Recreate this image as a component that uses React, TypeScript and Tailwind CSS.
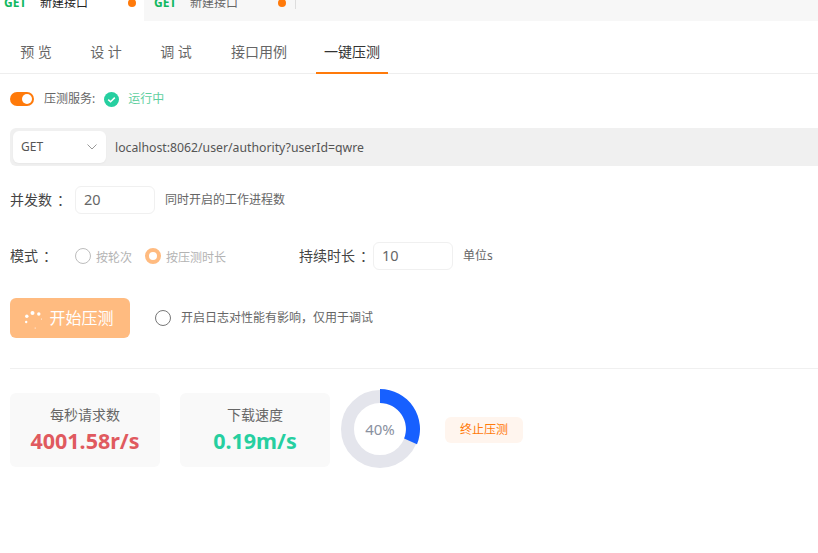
const font = "font-['Noto_Sans','Noto_Sans_CJK_SC',sans-serif]";

function RequestTab({ active, last }: { active?: boolean; last?: boolean }) {
  return (
    <div className={`h-[21px] overflow-hidden ${active ? "w-[144px] bg-white pl-1" : "bg-[#f7f7f7]"} ${last ? "w-[152px] pl-[10px]" : ""}`}>
      <div className="-mt-[8px] flex h-[22px] items-center">
        <span className="w-[36px] text-[12px] font-bold text-[#10b860]">GET</span>
        <span className={`text-[12px] ${active ? "text-[#222]" : "text-[#666]"}`}>新建接口</span>
        <span className={`ml-auto h-2 w-2 rounded-full bg-[#ff7a0a] ${last ? "mr-[9px]" : "mr-2"}`} />
        {last && <span className="h-[12px] w-px bg-[#ddd]" />}
      </div>
    </div>
  );
}

function FieldLabel({ text, width }: { text: string; width: string }) {
  return (
    <span className={`whitespace-nowrap pb-[2px] text-[14px] text-[#444] ${width}`}>
      {text}
      <span className="ml-[5px]">：</span>
    </span>
  );
}

function Radio({ checked, label }: { checked?: boolean; label: string }) {
  return (
    <div className="flex items-center gap-[5px]">
      {checked ? (
        <span className="h-4 w-4 rounded-full border-[4px] border-[#ffbb80] bg-white" />
      ) : (
        <span className="h-4 w-4 rounded-full border border-[#bdbdbd] bg-white" />
      )}
      <span className="mt-[3px] text-[12px] text-[#b3b3b3]">{label}</span>
    </div>
  );
}

function Stat({ title, value, color }: { title: string; value: string; color: string }) {
  return (
    <div className="flex h-[74px] w-[150px] flex-col items-center rounded-md bg-[#f9f9f9] pt-[12px]">
      <span className="text-[14px] leading-[20px] text-[#666]">{title}</span>
      <span className={`text-[21.5px] font-bold leading-[32px] ${color}`}>{value}</span>
    </div>
  );
}

export default function App() {
  const tabs = ["预 览", "设 计", "调 试", "接口用例", "一键压测"];
  return (
    <div className={`h-[553px] w-[818px] overflow-hidden bg-white ${font}`}>
      <div className="flex h-[21px] bg-[#f7f7f7]">
        <RequestTab active />
        <RequestTab last />
      </div>

      <div className="flex h-[53px] gap-[18px] border-b border-[#eee] px-[10px]">
        {tabs.map((t, i) => (
          <div
            key={t}
            className={`-mb-px flex h-[53px] items-center justify-center whitespace-nowrap border-b-2 pt-[10px] text-[14px] ${
              i === 4
                ? "ml-[3px] w-[72px] border-[#ff7a0a] text-[#333]"
                : i === 3
                  ? "ml-[3px] w-[72px] border-transparent text-[#666]"
                  : "w-[52px] border-transparent text-[#666]"
            }`}
          >
            {t}
          </div>
        ))}
      </div>

      <div className="flex h-[50px] items-center pl-[10px]">
        <div className="flex h-[14px] w-[24px] items-center justify-end rounded-full bg-[#ff7a0a] pr-[2px]">
          <span className="h-[10px] w-[10px] rounded-full bg-white" />
        </div>
        <span className="ml-[10px] text-[12px] text-[#666]">压测服务:</span>
        <svg className="ml-[9px]" width="15" height="15" viewBox="0 0 15 15">
          <circle cx="7.5" cy="7.5" r="7.5" fill="#26cfa0" />
          <path d="M4.2 7.6 L6.6 9.8 L10.8 5.6" fill="none" stroke="#fff" strokeWidth="1.5" />
        </svg>
        <span className="ml-[9px] text-[12px] text-[#5fcf9f]">运行中</span>
      </div>

      <div className="mt-[4px] ml-[10px] flex h-[38px] items-center rounded-l-md bg-[#f0f0f0] pl-[3px]">
        <div className="flex h-[32px] w-[93px] items-center justify-between rounded-md bg-white pl-[8px] pr-[9px] shadow-[0_1px_2px_rgba(0,0,0,0.04)]">
          <span className="text-[12px] text-[#555]">GET</span>
          <svg width="10" height="6" viewBox="0 0 10 6">
            <path d="M0.5 0.5 L5 5 L9.5 0.5" fill="none" stroke="#999" strokeWidth="1" />
          </svg>
        </div>
        <span className="ml-[9px] mt-[2px] text-[12.25px] text-[#555]">localhost:8062/user/authority?userId=qwre</span>
      </div>

      <div className="mt-[20px] flex h-[28px] items-center pl-[10px]">
        <FieldLabel text="并发数" width="w-[65px]" />
        <div className="flex h-[28px] w-[80px] items-center rounded-md border border-[#f0f0f0] pl-[8px] text-[14.5px] text-[#666]">20</div>
        <span className="ml-[10px] text-[12px] text-[#666]">同时开启的工作进程数</span>
      </div>

      <div className="mt-[28px] flex h-[28px] items-center pl-[10px]">
        <FieldLabel text="模式" width="w-[65px]" />
        <div className="flex w-[70px]">
          <Radio label="按轮次" />
        </div>
        <div className="flex w-[154px]">
          <Radio checked label="按压测时长" />
        </div>
        <FieldLabel text="持续时长" width="w-[74px]" />
        <div className="flex h-[28px] w-[80px] items-center rounded-md border border-[#f0f0f0] pl-[8px] text-[14.5px] text-[#666]">10</div>
        <span className="ml-[10px] text-[12px] text-[#666]">单位s</span>
      </div>

      <div className="mt-[28px] flex h-[40px] items-center pl-[10px]">
        <div className="flex h-[40px] w-[120px] items-center justify-center gap-[3px] rounded-md bg-[#ffbb80]">
          <svg className="overflow-visible" width="20" height="20" viewBox="0 0 20 20" fill="#fff">
            <circle cx="0.8" cy="8.3" r="1.7" />
            <circle cx="6.5" cy="5" r="2" />
            <circle cx="12.8" cy="6" r="1.7" />
            <circle cx="0.2" cy="14" r="1.2" />
            <circle cx="9.2" cy="20" r="0.6" />
            <circle cx="15.5" cy="11" r="0.5" />
          </svg>
          <span className="text-[16px] text-white">开始压测</span>
        </div>
        <span className="ml-[25px] h-4 w-4 rounded-full border border-[#777]" />
        <span className="ml-[10px] text-[12px] text-[#666]">开启日志对性能有影响，仅用于调试</span>
      </div>

      <div className="mt-[30px] ml-[10px] h-px bg-[#f0f0f0]" />

      <div className="mt-[20px] flex items-center pl-[10px]">
        <div className="mt-[2px] flex gap-[20px]">
          <Stat title="每秒请求数" value="4001.58r/s" color="text-[#e05a5f]" />
          <Stat title="下载速度" value="0.19m/s" color="text-[#26cfa0]" />
        </div>
        <div className="relative ml-[10px] flex h-[80px] w-[80px] items-center justify-center">
          <svg className="absolute left-0 top-0" width="80" height="80" viewBox="0 0 80 80">
            <circle cx="40" cy="40" r="32.5" fill="none" stroke="#e4e5ec" strokeWidth="13" />
            <path d="M40 0 A40 40 0 0 1 77 55.2 L64.1 49.6 A26 26 0 0 0 40 14 Z" fill="#1760ff" />
          </svg>
          <span className="relative text-[15px] text-[#8a919f]">40%</span>
        </div>
        <div className="ml-[25px] mt-[2px] flex h-[26px] w-[78px] items-center justify-center rounded-md bg-[#fff5ee] text-[12px] text-[#ff7a0a]">终止压测</div>
      </div>
    </div>
  );
}
